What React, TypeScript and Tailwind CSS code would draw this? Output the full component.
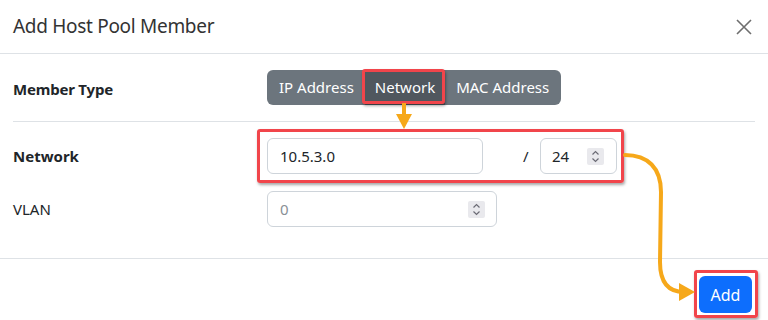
import React from 'react';

function Spinner() {
    return (
        <span className="flex h-[17px] w-[17px] flex-col items-center justify-center rounded-[2px] bg-[#e9e9ed]">
            <svg width="9" height="13" viewBox="0 0 9 13" fill="none" stroke="#6b6b75" strokeWidth="1.2">
                <path d="M1.5 4.5 L4.5 1.5 L7.5 4.5" />
                <path d="M1.5 8.5 L4.5 11.5 L7.5 8.5" />
            </svg>
        </span>
    );
}

function RedBox({ className }: { className: string }) {
    return (
        <div
            className={`pointer-events-none absolute rounded-[3px] border-[3px] border-[#f1454b] shadow-[1px_2px_3px_rgba(0,0,0,0.35)] ${className}`}
        ></div>
    );
}

export default function App() {
    return (
        <div
            className="relative h-[320px] w-[768px] overflow-hidden bg-white text-[#212529]"
            style={{ fontFamily: '"Noto Sans", "Open Sans", sans-serif' }}
        >
            {/* header */}
            <div className="flex h-[54px] items-center justify-between border-b border-[#dee2e6] pl-[13px] pr-[16px]">
                <h1 className="text-[19px] leading-none tracking-[-0.3px] text-[#333]">Add Host Pool Member</h1>
                <svg width="16" height="16" viewBox="0 0 16 16" stroke="#6e6e6e" strokeWidth="1.6">
                    <path d="M1 1 L15 15 M15 1 L1 15" />
                </svg>
            </div>

            {/* body */}
            <div className="px-[13px]">
                <div className="flex h-[68px] items-start border-b border-[#dee2e6] pt-[16px]">
                    <div className="w-[254px] pt-[8px] text-[15px] font-bold tracking-[-0.2px]">Member Type</div>
                    <div className="flex h-[35px] overflow-hidden rounded-[6px] bg-[#6c757d] text-[15px] text-white">
                        <span className="flex items-center pl-[12px] pr-[11px]">IP Address</span>
                        <span className="flex items-center bg-[#50575e] px-[10px]">Network</span>
                        <span className="flex items-center pl-[11px] pr-[12px]">MAC Address</span>
                    </div>
                </div>

                <div className="flex items-center pt-[16px]">
                    <div className="w-[254px] text-[15px] font-bold">Network</div>
                    <div className="flex h-[36px] w-[216px] items-center rounded-[6px] border border-[#ced4da] px-[12px] text-[15px]">
                        10.5.3.0
                    </div>
                    <div className="w-[57px] pl-[40px] text-[15px]">/</div>
                    <div className="flex h-[36px] w-[77px] items-center justify-between rounded-[6px] border border-[#ced4da] pl-[11px] pr-[12px] text-[15px]">
                        <span>24</span>
                        <Spinner />
                    </div>
                </div>

                <div className="flex items-center pt-[17px]">
                    <div className="w-[254px] text-[15px]">VLAN</div>
                    <div className="flex h-[36px] w-[230px] items-center justify-between rounded-[6px] border border-[#ced4da] pl-[12px] pr-[11px] text-[15px] text-[#8a9096]">
                        <span>0</span>
                        <Spinner />
                    </div>
                </div>
            </div>

            {/* footer */}
            <div className="mt-[31px] flex justify-end border-t border-[#dee2e6] pr-[16px] pt-[17px]">
                <button className="flex h-[37px] w-[53px] items-center justify-center rounded-[6px] bg-[#0d6efd] text-[16px] text-white">
                    Add
                </button>
            </div>

            {/* annotations */}
            <RedBox className="left-[362px] top-[69px] h-[35px] w-[83px]" />
            <RedBox className="left-[257px] top-[129px] h-[54px] w-[367px]" />
            <RedBox className="left-[694px] top-[270px] h-[48px] w-[64px]" />

            <svg className="pointer-events-none absolute left-0 top-0" width="768" height="320" viewBox="0 0 768 320">
                <g fill="#f6a81a" stroke="#f6a81a">
                    <path d="M404 103 L404 116" strokeWidth="4" fill="none" />
                    <path d="M396 114 L412 114 L404 129 Z" stroke="none" />
                    <path
                        d="M625 155 C648 155 661 168 661 192 L660 262 C660 282 668 292 684 292"
                        strokeWidth="4"
                        fill="none"
                        strokeLinecap="round"
                    />
                    <path d="M679 283 L695 292 L679 301 Z" stroke="none" />
                </g>
            </svg>
        </div>
    );
}
